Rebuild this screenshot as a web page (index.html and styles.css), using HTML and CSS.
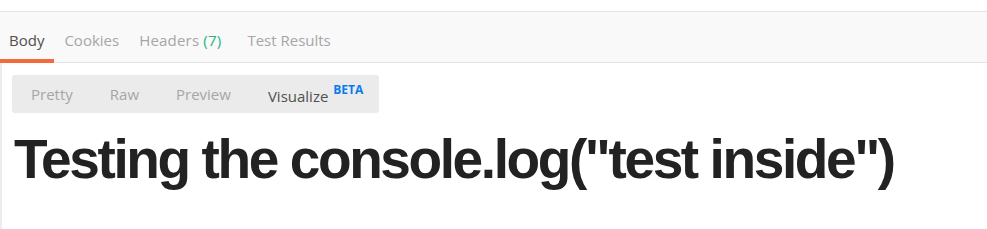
FILE: index.html
```html
<!DOCTYPE html>
<html lang="en">
<head>
  <meta charset="UTF-8" />
  <title>Response</title>
  <link rel="stylesheet" href="styles.css">
</head>
<body>
  <div class="response">
    <!-- Response tabs -->
    <div class="tabs">
      <div class="tab active">Body</div>
      <div class="tab">Cookies</div>
      <div class="tab">Headers <span class="count">(7)</span></div>
      <div class="tab">Test Results</div>
    </div>

    <!-- View modes -->
    <div class="modes">
      <div class="mode">Pretty</div>
      <div class="mode">Raw</div>
      <div class="mode">Preview</div>
      <div class="mode selected">Visualize <sup class="beta">BETA</sup></div>
    </div>

    <!-- Visualizer output -->
    <div class="output">
      <h1>Testing the console.log("test inside")</h1>
    </div>
  </div>
</body>
</html>
```

FILE: styles.css
```css
* {
  margin: 0;
  padding: 0;
  box-sizing: border-box;
}

body {
  background: #fff;
  font-family: 'Open Sans', sans-serif;
  width: 987px;
  height: 229px;
  overflow: hidden;
}

.response {
  margin-top: 11px;
  border-left: 2px solid #ececec;
  height: 218px;
}

/* Tabs */
.tabs {
  display: flex;
  height: 52px;
  background: #f9f9f9;
  border-top: 1px solid #e3e3e3;
  border-bottom: 1px solid #e3e3e3;
  padding-top: 16px;
  margin-left: -2px;
}

.tab {
  font-size: 15px;
  color: #a6a6a6;
  padding: 0 10px 0 9px;
  margin-right: 1px;
  height: 35px;
  line-height: 24px;
}

.tab:nth-child(3) {
  margin-right: 7px;
  letter-spacing: 0.2px;
}

.tab.active {
  color: #505050;
  border-bottom: 4px solid #f26b3a;
}

.count {
  color: #26b47f;
}

/* Modes */
.modes {
  display: flex;
  width: 367px;
  height: 38px;
  margin: 12px 0 0 10px;
  background: #ebebeb;
  border-radius: 3px;
  padding-left: 19px;
  align-items: center;
}

.mode {
  font-size: 15px;
  color: #a6a6a6;
  margin-right: 37px;
}

.mode.selected {
  color: #505050;
  margin-right: 0;
}

.beta {
  font-size: 12px;
  font-weight: bold;
  color: #097bed;
  position: relative;
  top: -2px;
  margin-left: 1px;
}

/* Output */
.output {
  padding: 14px 0 0 12px;
}

.output h1 {
  font-family: 'Liberation Sans', Arial, sans-serif;
  font-size: 55px;
  font-weight: bold;
  letter-spacing: -2.4px;
  color: #222;
  line-height: 64px;
  white-space: nowrap;
}
```
